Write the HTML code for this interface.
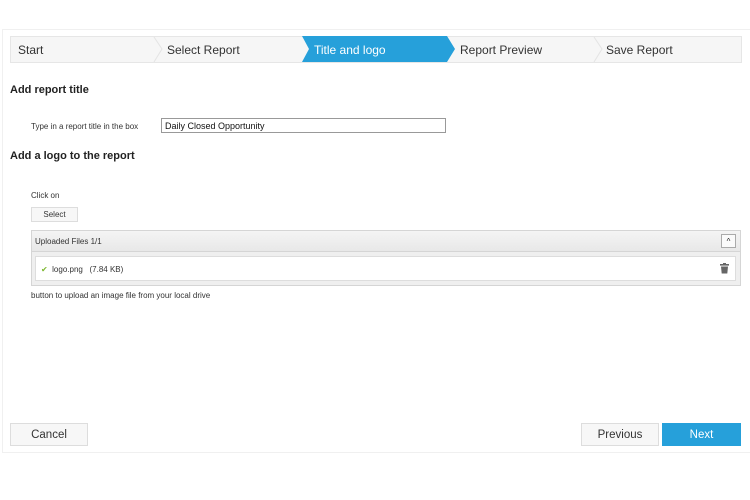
<!DOCTYPE html>
<html><head><style>
*{box-sizing:border-box;margin:0;padding:0}
body{width:750px;height:500px;background:#fff;font-family:"Liberation Sans",sans-serif;color:#222;position:relative;overflow:hidden}
.abs{position:absolute}
.cont{left:2px;top:29px;width:760px;height:424px;border:1px solid #f0f0f0}
.steps{left:10px;top:36px;width:732px;height:27px;background:#f6f6f6;border:1px solid #e6e6e6}
.st{position:absolute;top:43px;font-size:12px;color:#333}
h3{position:absolute;font-size:11px;font-weight:bold;color:#222}
.sm{position:absolute;font-size:8px;color:#333}
.btn{position:absolute;background:#f7f7f7;border:1px solid #ddd;font-size:11.5px;color:#333;text-align:center}
</style></head><body>
<div class="abs cont"></div>
<div class="abs steps"></div>
<svg class="abs" style="left:0;top:0" width="750" height="70">
<polyline points="154,37 162,49 154,62" fill="none" stroke="#e4e4e4"/>
<polyline points="594,37 602,49 594,62" fill="none" stroke="#e4e4e4"/>
<polygon points="302,36 447,36 455,49 447,62 302,62 309,49" fill="#26a0da"/>
</svg>
<div class="st" style="left:18px">Start</div>
<div class="st" style="left:167px">Select Report</div>
<div class="st" style="left:314px;color:#fff">Title and logo</div>
<div class="st" style="left:460px">Report Preview</div>
<div class="st" style="left:606px">Save Report</div>
<h3 style="left:10px;top:84px">Add report title</h3>
<div class="sm" style="left:31px;top:122px">Type in a report title in the box</div>
<div class="abs" style="left:161px;top:118px;width:285px;height:15px;border:1px solid #999;font-size:9px;padding:2px 0 0 3px;color:#111">Daily Closed Opportunity</div>
<h3 style="left:10px;top:150px">Add a logo to the report</h3>
<div class="sm" style="left:31px;top:191px">Click on</div>
<div class="btn" style="left:31px;top:207px;width:47px;height:15px;font-size:8px;line-height:13px">Select</div>
<div class="abs" style="left:31px;top:230px;width:710px;height:56px;border:1px solid #d5d5d5;background:#efefef"></div>
<div class="abs" style="left:31px;top:230px;width:710px;height:22px;border:1px solid #d5d5d5;background:linear-gradient(#f4f4f4,#e8e8e8)"></div>
<div class="sm" style="left:35px;top:237px">Uploaded Files 1/1</div>
<div class="abs" style="left:721px;top:234px;width:15px;height:14px;border:1px solid #aaa;background:#fafafa;font-size:8px;text-align:center;line-height:13px">^</div>
<div class="abs" style="left:35px;top:256px;width:701px;height:25px;border:1px solid #ddd;background:#fff"></div>
<div class="sm" style="left:41px;top:265px"><span style="color:#7cb82f">✔</span>&nbsp; logo.png &nbsp; (7.84 KB)</div>
<svg class="abs" style="left:720px;top:263px" width="9" height="11"><rect x="0" y="1" width="9" height="1.6" fill="#666"/><rect x="3" y="0" width="3" height="1.5" fill="#666"/><path d="M1 3.5h7l-.7 7h-5.6z" fill="#666"/></svg>
<div class="sm" style="left:31px;top:291px">button to upload an image file from your local drive</div>
<div class="btn" style="left:10px;top:423px;width:78px;height:23px;line-height:23px">Cancel</div>
<div class="btn" style="left:581px;top:423px;width:78px;height:23px;line-height:23px">Previous</div>
<div class="btn" style="left:662px;top:423px;width:79px;height:23px;line-height:23px;background:#26a0da;border-color:#26a0da;color:#fff">Next</div>
</body></html>
